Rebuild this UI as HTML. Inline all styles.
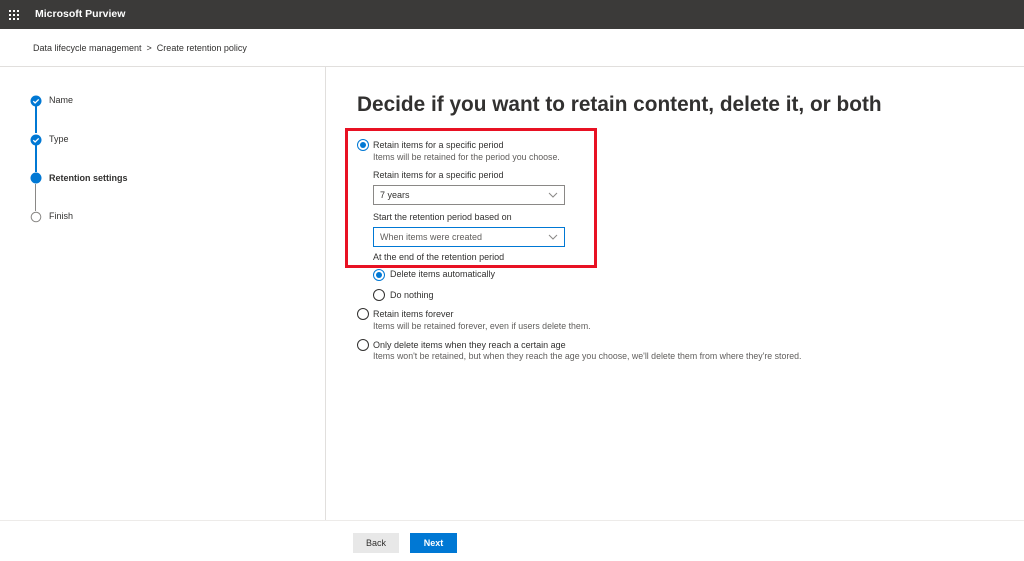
<!DOCTYPE html>
<html><head><style>
*{margin:0;padding:0;box-sizing:border-box}
body{width:1024px;height:561px;position:relative;background:#fff;font-family:"Segoe UI","Liberation Sans",sans-serif;color:#323130;overflow:hidden}
.a{position:absolute;white-space:nowrap}
.s{font-size:9px}
.sub{font-size:8.8px;color:#605e5c}
.rad{position:absolute;width:12px;height:12px;border:1px solid #323130;border-radius:50%;background:#fff}
.rad.on{border-color:#0078d4}
.rad.on::after{content:"";position:absolute;left:2px;top:2px;width:6px;height:6px;border-radius:50%;background:#0078d4}
.sel{position:absolute;height:20px;border:1px solid #8a8886;font-size:9px;padding:4px 6px;background:#fff}
.chev{position:absolute;right:6px;top:4px}
</style></head><body>
<div class="a" style="left:0;top:0;width:1024px;height:29px;background:#3b3a39"></div>
<svg class="a" style="left:9px;top:10px" width="10" height="10"><g fill="#fff"><rect x="0" y="0" width="2" height="2"/><rect x="4" y="0" width="2" height="2"/><rect x="8" y="0" width="2" height="2"/><rect x="0" y="4" width="2" height="2"/><rect x="4" y="4" width="2" height="2"/><rect x="8" y="4" width="2" height="2"/><rect x="0" y="8" width="2" height="2"/><rect x="4" y="8" width="2" height="2"/><rect x="8" y="8" width="2" height="2"/></g></svg>
<div class="a" style="left:35px;top:8px;color:#fff;font-size:10.5px;font-weight:bold">Microsoft Purview</div>
<div class="a s" style="left:33px;top:43px;color:#323130">Data lifecycle management &nbsp;&gt;&nbsp; Create retention policy</div>
<div class="a" style="left:0;top:66px;width:1024px;height:1px;background:#e1dfdd"></div>
<div class="a" style="left:325px;top:67px;width:1px;height:453px;background:#e1dfdd"></div>
<div class="a" style="left:0;top:520px;width:1024px;height:1px;background:#edebe9"></div>
<div class="a" style="left:35px;top:106px;width:2px;height:27px;background:#0078d4"></div>
<div class="a" style="left:35px;top:145px;width:2px;height:27px;background:#0078d4"></div>
<div class="a" style="left:35px;top:184px;width:1px;height:27px;background:#8a8886"></div>
<svg class="a" style="left:30px;top:95px" width="12" height="12"><circle cx="6" cy="6" r="5.5" fill="#0078d4"/><path d="M3.3 6.2l1.8 1.8 3.6-3.6" stroke="#fff" stroke-width="1.3" fill="none"/></svg>
<svg class="a" style="left:30px;top:134px" width="12" height="12"><circle cx="6" cy="6" r="5.5" fill="#0078d4"/><path d="M3.3 6.2l1.8 1.8 3.6-3.6" stroke="#fff" stroke-width="1.3" fill="none"/></svg>
<svg class="a" style="left:30px;top:172px" width="12" height="12"><circle cx="6" cy="6" r="5.5" fill="#0078d4"/></svg>
<svg class="a" style="left:30px;top:211px" width="12" height="12"><circle cx="6" cy="6" r="4.8" fill="#fff" stroke="#8a8886" stroke-width="1"/></svg>
<div class="a s" style="left:49px;top:95px">Name</div>
<div class="a s" style="left:49px;top:134px">Type</div>
<div class="a s" style="left:49px;top:173px;font-weight:bold">Retention settings</div>
<div class="a s" style="left:49px;top:211px">Finish</div>
<div class="a" style="left:357px;top:93px;font-size:20.8px;font-weight:bold;color:#323130">Decide if you want to retain content, delete it, or both</div>
<div class="a" style="left:345px;top:128px;width:252px;height:140px;border:3px solid #e81123"></div>
<div class="rad on" style="left:357px;top:139px"></div>
<div class="a s" style="left:373px;top:140px">Retain items for a specific period</div>
<div class="a sub" style="left:373px;top:152px">Items will be retained for the period you choose.</div>
<div class="a s" style="left:373px;top:170px">Retain items for a specific period</div>
<div class="sel" style="left:373px;top:185px;width:192px">7 years<svg class="chev" width="10" height="10"><path d="M1 3l4 4 4-4" stroke="#8a8886" fill="none"/></svg></div>
<div class="a s" style="left:373px;top:212px">Start the retention period based on</div>
<div class="sel" style="left:373px;top:227px;width:192px;border-color:#0078d4;color:#605e5c">When items were created<svg class="chev" width="10" height="10"><path d="M1 3l4 4 4-4" stroke="#8a8886" fill="none"/></svg></div>
<div class="a s" style="left:373px;top:252px">At the end of the retention period</div>
<div class="rad on" style="left:373px;top:269px"></div>
<div class="a s" style="left:390px;top:269px">Delete items automatically</div>
<div class="rad" style="left:373px;top:289px"></div>
<div class="a s" style="left:390px;top:290px">Do nothing</div>
<div class="rad" style="left:357px;top:308px"></div>
<div class="a s" style="left:373px;top:309px">Retain items forever</div>
<div class="a sub" style="left:373px;top:321px">Items will be retained forever, even if users delete them.</div>
<div class="rad" style="left:357px;top:339px"></div>
<div class="a s" style="left:373px;top:340px">Only delete items when they reach a certain age</div>
<div class="a sub" style="left:373px;top:351px">Items won't be retained, but when they reach the age you choose, we'll delete them from where they're stored.</div>
<div class="a s" style="left:353px;top:533px;width:46px;height:20px;background:#e8e8e8;text-align:center;line-height:20px">Back</div>
<div class="a s" style="left:410px;top:533px;width:47px;height:20px;background:#0078d4;color:#fff;font-weight:bold;text-align:center;line-height:20px">Next</div>
</body></html>
